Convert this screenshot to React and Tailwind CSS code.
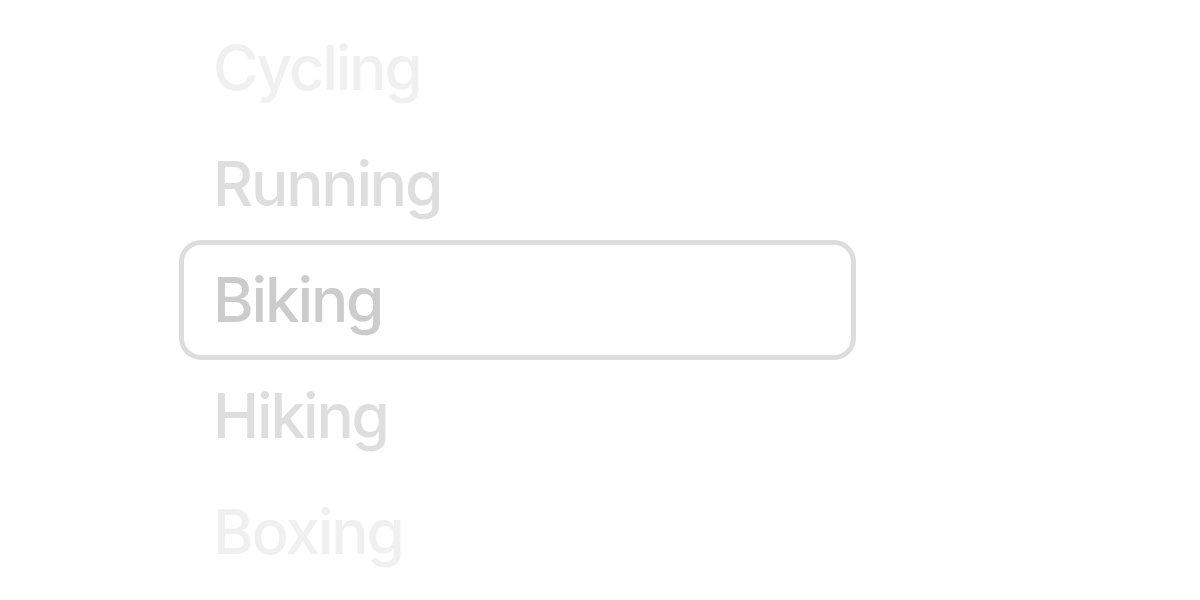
const items = [
  { label: 'Cycling', color: 'text-[#f0f0f0]' },
  { label: 'Running', color: 'text-[#dedede]' },
  { label: 'Biking', color: 'text-[#cccccc]', selected: true },
  { label: 'Hiking', color: 'text-[#dedede]' },
  { label: 'Boxing', color: 'text-[#f0f0f0]' },
];

export default function App() {
  return (
    <div className="w-[1200px] h-[600px] bg-white overflow-hidden font-['Inter',sans-serif]">
      <div className="ml-[179px] w-[677px] pt-[10px] flex flex-col">
        {items.map((item) =>
          item.selected ? (
            <div
              key={item.label}
              className="h-[120px] -my-[2px] flex items-center px-[29px] border-[5px] border-[#dddddd] rounded-[22px]"
            >
              <span className={`text-[62px] leading-none font-medium tracking-[-0.035em] ${item.color}`}>{item.label}</span>
            </div>
          ) : (
            <div key={item.label} className="h-[116px] flex items-center px-[34px]">
              <span className={`text-[62px] leading-none font-medium tracking-[-0.035em] ${item.color}`}>{item.label}</span>
            </div>
          )
        )}
      </div>
    </div>
  );
}
